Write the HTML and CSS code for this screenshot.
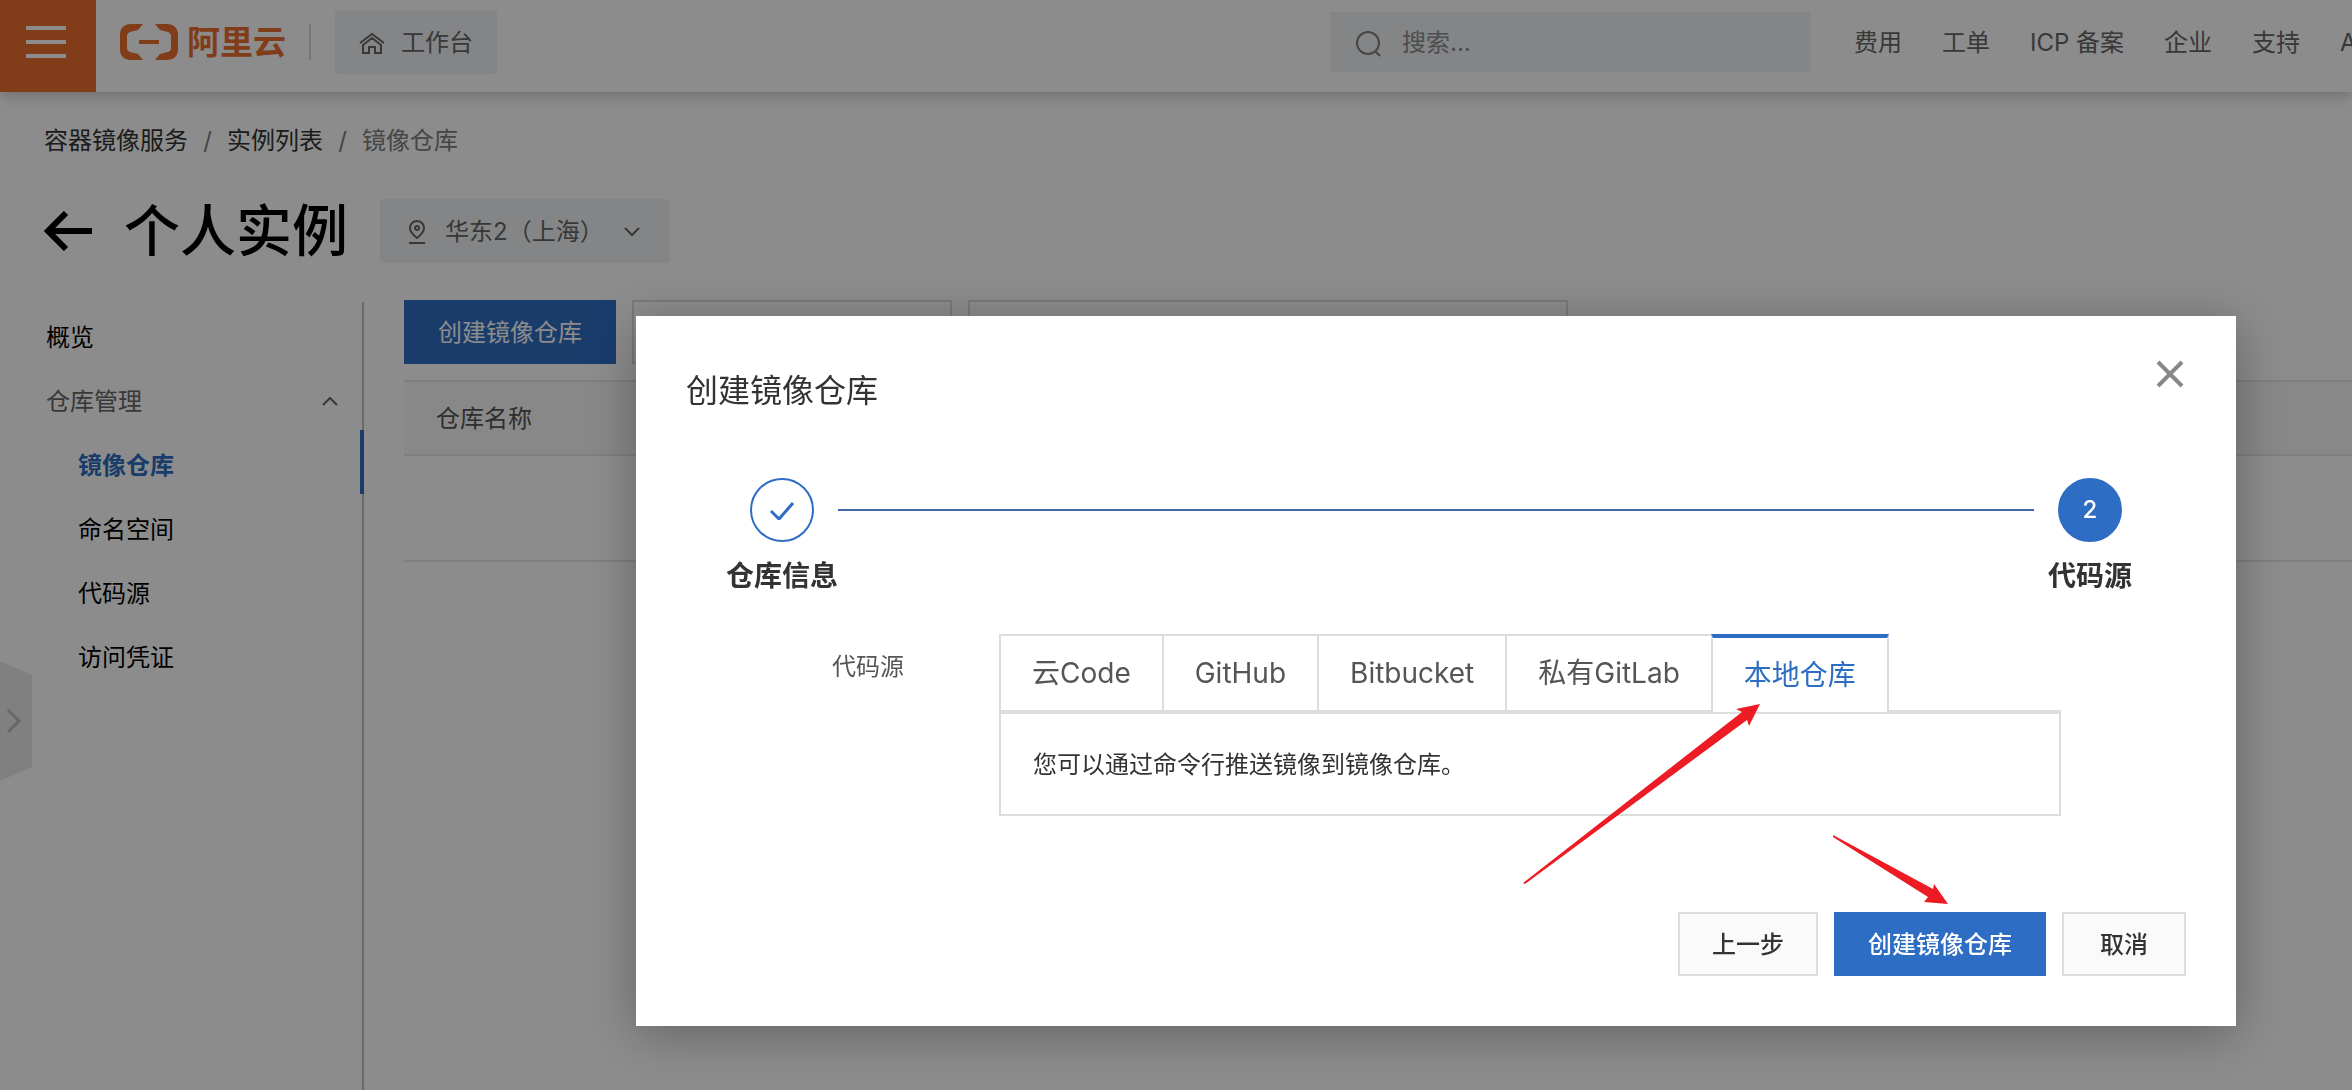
FILE: index.html
```
<!DOCTYPE html>
<html lang="zh-CN">
<head>
    <meta charset="UTF-8">
    <meta name="viewport" content="width=device-width, initial-scale=1.0">
    <title>容器镜像服务 - 镜像仓库</title>
    <link rel="stylesheet" href="styles.css">
</head>
<body>

    <!-- 顶部导航 -->
    <header class="topbar">
        <button class="menu-btn" type="button" aria-label="菜单">
            <span></span><span></span><span></span>
        </button>
        <a class="logo" href="#">
            <svg width="60" height="38" viewBox="0 0 60 38" fill="currentColor">
                <path d="M24 1H12C5 1 1 5 1 12v14c0 7 4 11 11 11h12l-5-6-8-2c-2-1-3-2-3-4V13c0-2 1-3 3-4l8-2z"/>
                <path d="M36 1h12c7 0 11 4 11 11v14c0 7-4 11-11 11H36l5-6 8-2c2-1 3-2 3-4V13c0-2-1-3-3-4l-8-2z"/>
                <path d="M20 17h20v4H20z"/>
            </svg>
            <span class="logo-text">阿里云</span>
        </a>
        <span class="divider"></span>
        <a class="workbench" href="#">
            <svg width="26" height="24" viewBox="0 0 26 24" fill="none" stroke="currentColor" stroke-width="2">
                <path d="M1 12 13 3l12 9"/>
                <path d="M4 14v8h6v-6h6v6h6v-8l-9-7z"/>
            </svg>
            工作台
        </a>
        <label class="search">
            <svg width="26" height="28" viewBox="0 0 26 28" fill="none" stroke="currentColor" stroke-width="2">
                <circle cx="12" cy="14" r="11"/>
                <path d="m19 22 5 5"/>
            </svg>
            <input type="text" placeholder="搜索..." aria-label="搜索">
        </label>
        <nav class="top-links">
            <a href="#">费用</a>
            <a href="#">工单</a>
            <a href="#">ICP 备案</a>
            <a href="#">企业</a>
            <a href="#">支持</a>
            <a href="#">App</a>
        </nav>
    </header>

    <nav class="breadcrumb">
        <a href="#">容器镜像服务</a>
        <span class="slash">/</span>
        <a href="#">实例列表</a>
        <span class="slash">/</span>
        <span class="current">镜像仓库</span>
    </nav>

    <div class="page-title">
        <a class="back" href="#" aria-label="返回">
            <svg width="48" height="40" viewBox="0 0 48 40" fill="none" stroke="currentColor" stroke-width="6">
                <path d="M22 2 4 20l18 18M4 20h44"/>
            </svg>
        </a>
        <h1>个人实例</h1>
        <button class="region" type="button">
            <svg width="18" height="24" viewBox="0 0 18 24" fill="none" stroke="currentColor" stroke-width="2">
                <path d="M9 18C4 14 2 11 2 8a7 7 0 0 1 14 0c0 3-2 6-7 10z"/>
                <circle cx="9" cy="8" r="2"/>
                <path d="M1 23h16"/>
            </svg>
            <span>华东2（上海）</span>
            <svg class="arrow-down" width="16" height="10" viewBox="0 0 16 10" fill="none" stroke="currentColor" stroke-width="2">
                <path d="m1 1 7 7 7-7"/>
            </svg>
        </button>
    </div>

    <div class="layout">
        <aside class="sidebar">
            <a href="#">概览</a>
            <a class="group" href="#">仓库管理
                <svg width="16" height="10" viewBox="0 0 16 10" fill="none" stroke="currentColor" stroke-width="2">
                    <path d="m1 8 7-7 7 7"/>
                </svg>
            </a>
            <a class="sub active" href="#">镜像仓库</a>
            <a class="sub" href="#">命名空间</a>
            <a class="sub" href="#">代码源</a>
            <a class="sub" href="#">访问凭证</a>
        </aside>

        <main class="content">
            <div class="toolbar">
                <button class="btn btn-primary" type="button">创建镜像仓库</button>
                <select class="filter" aria-label="命名空间"></select>
                <input class="keyword" type="text" aria-label="仓库名称">
            </div>
            <table class="repo-table">
                <thead>
                    <tr><th>仓库名称</th></tr>
                </thead>
                <tbody>
                    <tr><td></td></tr>
                </tbody>
            </table>
        </main>
    </div>

    <button class="drawer" type="button" aria-label="展开">
        <svg width="32" height="120" viewBox="0 0 32 120" fill="none">
            <path d="M0 0 32 14v92L0 120z" fill="#e9e9e9"/>
            <path d="m8 49 11 11-11 11" stroke="#bdbdbd" stroke-width="3"/>
        </svg>
    </button>

    <!-- 创建镜像仓库弹窗 -->
    <div class="overlay">
        <div class="dialog" role="dialog" aria-labelledby="dialogTitle">
            <div class="dialog-header">
                <h2 id="dialogTitle">创建镜像仓库</h2>
                <button class="close" type="button" aria-label="关闭">
                    <svg width="30" height="30" viewBox="0 0 30 30" fill="none" stroke="currentColor" stroke-width="4">
                        <path d="m2 4 24 24M26 4 2 28"/>
                    </svg>
                </button>
            </div>

            <div class="steps">
                <div class="step">
                    <span class="dot">
                        <svg width="26" height="20" viewBox="0 0 26 20" fill="none" stroke="currentColor" stroke-width="3">
                            <path d="m2 11 8 8L24 3"/>
                        </svg>
                    </span>
                    <span class="step-name">仓库信息</span>
                </div>
                <span class="step-line"></span>
                <div class="step">
                    <span class="dot dot-current">2</span>
                    <span class="step-name">代码源</span>
                </div>
            </div>

            <div class="form-row">
                <span class="form-label">代码源</span>
                <div class="source">
                    <div class="tabs" role="tablist">
                        <button class="tab" type="button" role="tab">云Code</button>
                        <button class="tab" type="button" role="tab">GitHub</button>
                        <button class="tab" type="button" role="tab">Bitbucket</button>
                        <button class="tab" type="button" role="tab">私有GitLab</button>
                        <button class="tab tab-active" type="button" role="tab" aria-selected="true">本地仓库</button>
                    </div>
                    <div class="tab-panel" role="tabpanel">您可以通过命令行推送镜像到镜像仓库。</div>
                </div>
            </div>

            <div class="dialog-footer">
                <button class="btn" type="button">上一步</button>
                <button class="btn btn-primary" type="button">创建镜像仓库</button>
                <button class="btn" type="button">取消</button>
            </div>

            <!-- 操作提示箭头 -->
            <svg class="arrows" width="1600" height="710" viewBox="0 0 1600 710" fill="#ed1c24">
                <path d="M887 567 1106 396 1100 393 1124 388 1113 410 1111 404 889 568z"/>
                <path d="M1197 519 1297 573 1298 568 1312 588 1288 586 1292 581 1197 521z"/>
            </svg>
        </div>
    </div>

</body>
</html>
```
FILE: styles.css
```
* {
    box-sizing: border-box;
}

body {
    margin: 0;
    min-height: 100vh;
    display: flex;
    flex-direction: column;
    overflow: hidden;
    font-family: Inter, "Noto Sans CJK SC", sans-serif;
    font-size: 24px;
    line-height: 36px;
    color: #333;
    background-color: #fff;
}

a {
    color: inherit;
    text-decoration: none;
}

button, input, select {
    font: inherit;
    color: inherit;
    border: none;
    border-radius: 0;
    background: none;
    padding: 0;
    margin: 0;
}

button {
    cursor: pointer;
}

svg {
    display: block;
    flex: none;
}

/* 顶部导航 */
.topbar {
    display: flex;
    height: 92px;
    padding-bottom: 8px;
    align-items: center;
    color: #666;
    box-shadow: 0 2px 16px rgba(0,0,0,0.25);
}

.menu-btn {
    width: 96px;
    height: 92px;
    margin-bottom: -8px;
    padding: 26px 30px 34px 26px;
    display: flex;
    flex-direction: column;
    justify-content: space-between;
    flex: none;
    background-color: #ec6f2f;
}

.menu-btn span {
    width: 40px;
    height: 4px;
    background-color: #fff;
}

.logo {
    display: flex;
    align-items: center;
    gap: 8px;
    margin-left: 23px;
    color: #ec6f2f;
}

.logo-text {
    font-size: 33px;
    font-weight: bold;
}

.divider {
    width: 2px;
    height: 36px;
    margin: 0 24px 0 23px;
    background-color: #d8d8d8;
}

.workbench {
    display: flex;
    align-items: center;
    gap: 16px;
    height: 64px;
    padding: 2px 24px 0;
    border-radius: 4px;
    background-color: #f0f2f5;
}

.search {
    display: flex;
    align-items: center;
    gap: 20px;
    width: 480px;
    height: 60px;
    margin-left: auto;
    padding: 2px 26px 0;
    background-color: #f0f2f5;
    color: #808080;
}

.search input {
    flex: 1;
    min-width: 0;
}

.search input::placeholder {
    color: #8c8c8c;
}

.top-links {
    display: flex;
    gap: 40px;
    margin: 0 -34px 0 44px;
    padding-top: 2px;
    white-space: nowrap;
}

/* 面包屑与标题 */
.breadcrumb {
    display: flex;
    padding: 31px 44px 0;
}

.slash {
    width: 39px;
    text-align: center;
    color: #808080;
}

.current {
    color: #808080;
}

.page-title {
    display: flex;
    align-items: center;
    padding: 40px 44px 37px;
    color: #000;
}

.page-title h1 {
    margin: 0 32px;
    font-size: 56px;
    line-height: 64px;
    font-weight: 500;
}

.region {
    display: flex;
    align-items: center;
    gap: 19px;
    width: 290px;
    height: 64px;
    padding: 2px 30px 0 28px;
    border-radius: 4px;
    color: #666;
    background-color: #f0f2f5;
}

.arrow-down {
    margin-left: auto;
}

.layout {
    display: flex;
    flex: 1;
}

/* 侧边栏 */
.sidebar {
    width: 364px;
    flex: none;
    margin-top: 2px;
    border-right: 2px solid #c3c3c3;
    color: #000;
}

.sidebar a {
    display: flex;
    align-items: center;
    justify-content: space-between;
    height: 64px;
    padding: 8px 24px 0 46px;
}

.sidebar .group {
    color: #666;
}

.sidebar .sub {
    padding-left: 78px;
}

.sidebar .active {
    margin-right: -2px;
    border-right: 4px solid #2e6dc4;
    color: #2e6dc4;
    font-weight: bold;
}

/* 仓库列表 */
.content {
    flex: 1;
    padding-left: 40px;
}

.toolbar {
    display: flex;
    gap: 16px;
    margin-bottom: 16px;
}

.btn {
    height: 64px;
    min-width: 124px;
    padding: 2px 32px 0;
    border: 2px solid #ddd;
    background-color: #fafafa;
    white-space: nowrap;
}

.btn-primary {
    border-color: #2e6dc4;
    background-color: #2e6dc4;
    color: #fff;
}

.filter, .keyword {
    height: 64px;
    border: 2px solid #ddd;
}

.filter {
    width: 320px;
    appearance: none;
}

.keyword {
    width: 600px;
}

.repo-table {
    width: 100%;
    border-collapse: collapse;
}

.repo-table th {
    height: 74px;
    padding: 2px 32px 0;
    border-top: 2px solid #e5e5e5;
    background-color: #f8f8f8;
    color: #555;
    font-weight: normal;
    text-align: left;
}

.repo-table td {
    height: 106px;
    border-top: 2px solid #e5e5e5;
    border-bottom: 2px solid #e5e5e5;
}

.drawer {
    position: fixed;
    left: 0;
    top: 661px;
}

/* 弹窗 */
.overlay {
    position: fixed;
    top: 0;
    left: 0;
    width: 100%;
    height: 100%;
    padding: 316px 116px 0 636px;
    background-color: rgba(0,0,0,0.45);
}

.dialog {
    position: relative;
    padding: 50px;
    background-color: #fff;
    box-shadow: 0 8px 48px rgba(0,0,0,0.3);
}

.dialog-header {
    display: flex;
    justify-content: space-between;
    align-items: flex-start;
}

.dialog-header h2 {
    margin: 0;
    font-size: 32px;
    line-height: 50px;
    font-weight: normal;
}

.close {
    margin-top: -8px;
    color: #888;
}

.steps {
    display: flex;
    padding: 62px 40px 0;
}

.step {
    display: flex;
    flex-direction: column;
    align-items: center;
    width: 112px;
}

.dot {
    display: flex;
    align-items: center;
    justify-content: center;
    width: 64px;
    height: 64px;
    border: 2px solid #2e6dc4;
    border-radius: 50%;
    color: #2e6dc4;
    font-weight: 500;
}

.dot-current {
    background-color: #2e6dc4;
    color: #fff;
}

.step-name {
    margin-top: 14px;
    font-size: 28px;
    line-height: 40px;
    font-weight: bold;
}

.step-line {
    flex: 1;
    height: 2px;
    margin-top: 31px;
    background-color: #4069a5;
}

.form-row {
    display: flex;
    padding: 38px 125px 0 146px;
}

.form-label {
    width: 167px;
    flex: none;
    padding-top: 15px;
    color: #555;
}

.source {
    flex: 1;
}

.tabs {
    display: flex;
    border-bottom: 2px solid #ddd;
}

.tab {
    height: 76px;
    padding: 0 31px;
    border-top: 2px solid #ddd;
    border-left: 2px solid #ddd;
    font-size: 28px;
    color: #555;
}

.tab-active {
    height: 78px;
    margin-bottom: -2px;
    border-top: 4px solid #2e6dc4;
    border-right: 2px solid #ddd;
    background-color: #fff;
    color: #2e6dc4;
}

.tab-panel {
    padding: 33px 32px 31px;
    border: 2px solid #ddd;
}

.dialog-footer {
    display: flex;
    justify-content: flex-end;
    gap: 16px;
    padding-top: 96px;
}

.dialog-footer .btn {
    font-weight: 500;
}

/* 红色箭头浮在弹窗上方 */
.arrows {
    position: absolute;
    top: 0;
    left: 0;
    pointer-events: none;
}
```
